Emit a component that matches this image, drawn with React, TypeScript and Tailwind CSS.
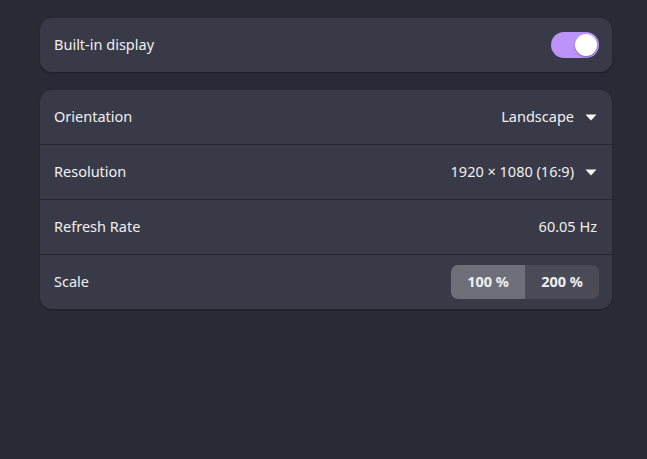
import React from "react";

function Caret() {
  return (
    <svg width="12" height="7" viewBox="0 0 12 7" className="ml-[11px]">
      <path d="M0.5 0.5 L11.5 0.5 L6 6.5 Z" fill="#f8f8f2" />
    </svg>
  );
}

export default function App() {
  return (
    <div
      className="w-[647px] h-[459px] bg-[#282a36] text-[#f0f0f0] pl-[40px] pr-[35px] pt-[18px] flex flex-col gap-[18px]"
      style={{ fontFamily: '"Noto Sans", sans-serif' }}
    >
      <div className="h-[54px] rounded-[12px] bg-[#393a48] shadow-[0_1px_2px_rgba(0,0,0,0.3)] flex items-center justify-between pl-[14px] pr-[13px] text-[14.5px]">
        <span>Built-in display</span>
        <div className="w-[48px] h-[26px] rounded-full bg-[#bd93f9] flex items-center justify-end pr-[2px]">
          <div className="w-[22px] h-[22px] rounded-full bg-white shadow-[0_1px_2px_rgba(0,0,0,0.35)]" />
        </div>
      </div>
      <div className="rounded-[12px] bg-[#393a48] shadow-[0_1px_2px_rgba(0,0,0,0.3)] flex flex-col text-[14.5px]">
        <div className="h-[55px] flex items-center justify-between pl-[14px] pr-[15px] border-b border-[#25262f]">
          <span>Orientation</span>
          <span className="flex items-center">Landscape<Caret /></span>
        </div>
        <div className="h-[55px] flex items-center justify-between pl-[14px] pr-[15px] border-b border-[#25262f]">
          <span>Resolution</span>
          <span className="flex items-center">1920 × 1080 (16:9)<Caret /></span>
        </div>
        <div className="h-[55px] flex items-center justify-between pl-[14px] pr-[15px] border-b border-[#25262f]">
          <span>Refresh Rate</span>
          <span>60.05 Hz</span>
        </div>
        <div className="h-[54px] flex items-center justify-between pl-[14px] pr-[13px]">
          <span>Scale</span>
          <div className="flex h-[34px] rounded-[7px] overflow-hidden font-bold text-[14.5px]">
            <div className="w-[74px] bg-[#6e6f78] flex items-center justify-center">100 %</div>
            <div className="w-[74px] bg-[#4a4b57] flex items-center justify-center">200 %</div>
          </div>
        </div>
      </div>
    </div>
  );
}
